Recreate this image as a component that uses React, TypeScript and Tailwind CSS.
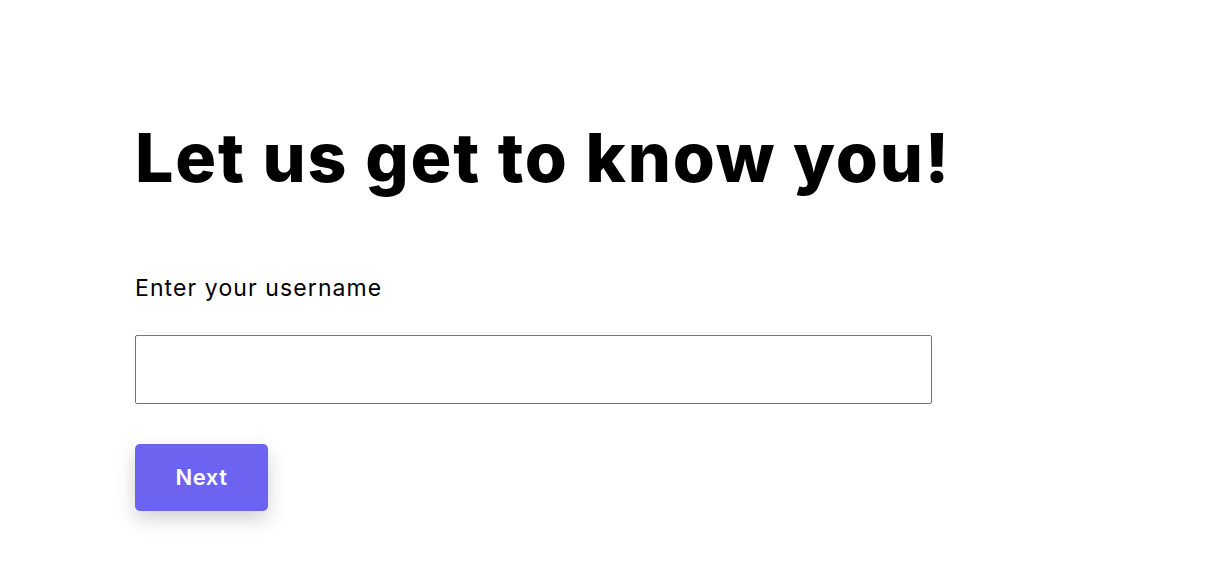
export default function App() {
  return (
    <div className="min-h-screen bg-white font-['Inter',sans-serif] text-black">
      <div className="pl-[135px] pt-[112px]">
        <h1 className="text-[68px] font-extrabold leading-[90px] tracking-[1.85px]">
          Let us get to know you!
        </h1>
        <label className="mt-[70px] block text-[23px] leading-[32px] font-normal tracking-[1.1px]">
          Enter your username
        </label>
        <input
          type="text"
          className="mt-[31px] block h-[69px] w-[797px] rounded-[2px] border border-[#767676] bg-white px-3 outline-none"
        />
        <button className="mt-[40px] h-[67px] w-[133px] rounded-[5px] bg-[#6c63f0] text-[22px] font-semibold tracking-[0.5px] text-white shadow-[0_8px_20px_rgba(0,0,0,0.18)]">
          Next
        </button>
      </div>
    </div>
  );
}
